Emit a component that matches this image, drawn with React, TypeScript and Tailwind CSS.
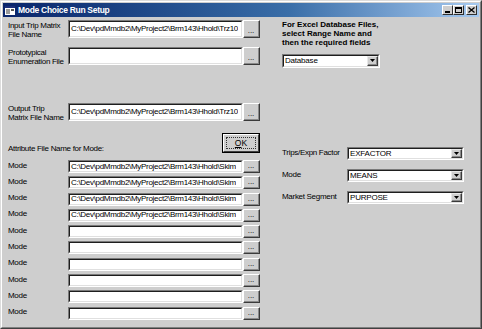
import React from "react";

const font = "font-['Liberation_Sans',Arial,sans-serif]";

const topPath = "C:\\Dev\\pdMmdb2\\MyProject2\\Brm143\\Hhold\\Trz10";
const skimPath = "C:\\Dev\\pdMmdb2\\MyProject2\\Brm143\\Hhold\\Skim";

const modes = [skimPath, skimPath, skimPath, skimPath, "", "", "", "", "", ""];

function Sunken({ className = "", children }: { className?: string; children?: React.ReactNode }) {
  return (
    <div className={`border border-t-[#7a7a7a] border-l-[#7a7a7a] border-b-white border-r-white ${className}`}>
      <div className="flex h-full items-center overflow-hidden border border-t-[#1e1e1e] border-l-[#1e1e1e] border-b-[#e0e0e0] border-r-[#e0e0e0] bg-white">
        {children}
      </div>
    </div>
  );
}

function Browse({ className = "" }: { className?: string }) {
  return (
    <div className={`w-[17px] shrink-0 border border-t-white border-l-white border-b-[#3a3a3a] border-r-[#3a3a3a] bg-[#cecece] ${className}`}>
      <div className="flex h-full items-end justify-center border-r border-b border-r-[#8a8a8a] border-b-[#8a8a8a] pb-[2px] text-[8px] leading-[6px]">
        ...
      </div>
    </div>
  );
}

function PathText({ value }: { value: string }) {
  return (
    <span className="min-w-0 overflow-hidden whitespace-nowrap pl-[1px] text-[8px] leading-none tracking-[-0.3px] text-black">
      {value}
    </span>
  );
}

function Combo({ value, className = "" }: { value: string; className?: string }) {
  return (
    <Sunken className={className}>
      <span className="flex-1 whitespace-nowrap pl-[1px] text-[8px] leading-none tracking-[-0.2px]">{value}</span>
      <div className="h-full w-[11px] shrink-0 border border-t-[#e8e8e8] border-l-[#e8e8e8] border-b-[#3a3a3a] border-r-[#3a3a3a] bg-[#cecece]">
        <div className="flex h-full items-center justify-center border-r border-b border-r-[#8a8a8a] border-b-[#8a8a8a]">
          <svg width="5" height="3" viewBox="0 0 5 3">
            <path d="M0 0h5L2.5 3z" fill="#000" />
          </svg>
        </div>
      </div>
    </Sunken>
  );
}

function CapButton({ children, className = "" }: { children: React.ReactNode; className?: string }) {
  return (
    <div className={`flex h-[10px] w-[11px] items-center justify-center border border-t-white border-l-white border-b-[#303030] border-r-[#303030] bg-[#cecece] ${className}`}>
      {children}
    </div>
  );
}

function FileRow({ label, value, className = "" }: { label: string[]; value: string; className?: string }) {
  return (
    <div className={`flex items-start ${className}`}>
      <div className="w-[60px] shrink-0 pt-[1px] text-[8px] leading-[9px] tracking-[-0.3px]">
        {label.map((l) => (
          <div key={l}>{l}</div>
        ))}
      </div>
      <Sunken className="h-[18px] w-[175px]">
        <PathText value={value} />
      </Sunken>
      <Browse className="h-[18px]" />
    </div>
  );
}

export default function App() {
  return (
    <div className={`${font} h-[329px] w-[482px] border border-t-[#dcdcdc] border-l-[#dcdcdc] border-b-[#404040] border-r-[#404040] bg-[#cecece] text-black`}>
      <div className="h-full border border-t-white border-l-white border-b-[#808080] border-r-[#808080] p-[1px]">
        {/* caption */}
        <div className="flex h-[14px] items-center bg-linear-to-r from-[#0a246a] via-[#3a6ea8] via-60% to-[#a6caf0] pl-[2px] pr-[2px]">
          <svg width="10" height="9" viewBox="0 0 10 9">
            <rect x="0" y="0" width="10" height="9" fill="#ffffff" />
            <rect x="0" y="0" width="10" height="2" fill="#1c2f7a" />
            <rect x="1" y="3" width="4" height="5" fill="#9a9a9a" />
            <rect x="6" y="3" width="3" height="2" fill="#555" />
          </svg>
          <span className="ml-[3px] whitespace-nowrap text-[8.5px] font-bold leading-none tracking-[-0.3px] text-white">
            Mode Choice Run Setup
          </span>
          <div className="ml-auto flex items-center">
            <CapButton>
              <svg width="6" height="6" viewBox="0 0 6 6">
                <rect x="0" y="4" width="5" height="2" fill="#000" />
              </svg>
            </CapButton>
            <CapButton>
              <svg width="7" height="6" viewBox="0 0 7 6">
                <path d="M0 0h7v6H0z M1 2v3h5V2z" fill="#000" fillRule="evenodd" />
              </svg>
            </CapButton>
            <CapButton className="ml-[2px]">
              <svg width="7" height="6" viewBox="0 0 7 6">
                <path d="M0.5 0.5L6.5 5.5M6.5 0.5L0.5 5.5" stroke="#000" strokeWidth="1.3" />
              </svg>
            </CapButton>
          </div>
        </div>

        {/* body */}
        <div className="flex pl-[5px] pt-[3px]">
          <div className="flex w-[252px] shrink-0 flex-col">
            <FileRow label={["Input Trip Matrix", "File Name"]} value={topPath} />
            <FileRow className="mt-[8px]" label={["Prototypical", "Enumeration File"]} value="" />
            <FileRow className="mt-[37px]" label={["Output Trip", "Matrix File Name"]} value={topPath} />

            <div className="mt-[11px] flex h-[20px] items-end">
              <span className="text-[8px] leading-[9px] tracking-[-0.3px]">Attribute File Name for Mode:</span>
              <div className="ml-auto h-[20px] w-[38px] border border-black bg-[#cecece]">
                <div className="h-full border border-t-white border-l-white border-b-[#404040] border-r-[#404040] p-[2px]">
                  <div className="flex h-full items-center justify-center border border-dotted border-[#333] text-[8.5px] leading-none">
                    <span className="underline underline-offset-1">O</span>K
                  </div>
                </div>
              </div>
            </div>

            <div className="mt-[7px] flex flex-col gap-[3.3px]">
              {modes.map((m, i) => (
                <div key={i} className="flex items-center">
                  <span className="w-[60px] shrink-0 pb-[2px] text-[8px] leading-none tracking-[-0.3px]">Mode</span>
                  <Sunken className="h-[13px] w-[175px]">
                    <PathText value={m} />
                  </Sunken>
                  <Browse className="h-[13px]" />
                </div>
              ))}
            </div>
          </div>

          <div className="ml-[22px] flex flex-col">
            <div className="text-[8px] font-bold leading-[9px]">
              <div>For Excel Database Files,</div>
              <div>select Range Name and</div>
              <div>then the required fields</div>
            </div>
            <Combo className="mt-[7px] h-[14px] w-[98px]" value="Database" />

            <div className="mt-[79px] flex flex-col gap-[9px]">
              {[
                ["Trips/Expn Factor", "EXFACTOR"],
                ["Mode", "MEANS"],
                ["Market Segment", "PURPOSE"],
              ].map(([label, value]) => (
                <div key={label} className="flex items-center">
                  <span className="w-[65px] shrink-0 pb-[2px] text-[8px] leading-none tracking-[-0.3px]">{label}</span>
                  <Combo className="h-[13px] w-[117px]" value={value} />
                </div>
              ))}
            </div>
          </div>
        </div>
      </div>
    </div>
  );
}
